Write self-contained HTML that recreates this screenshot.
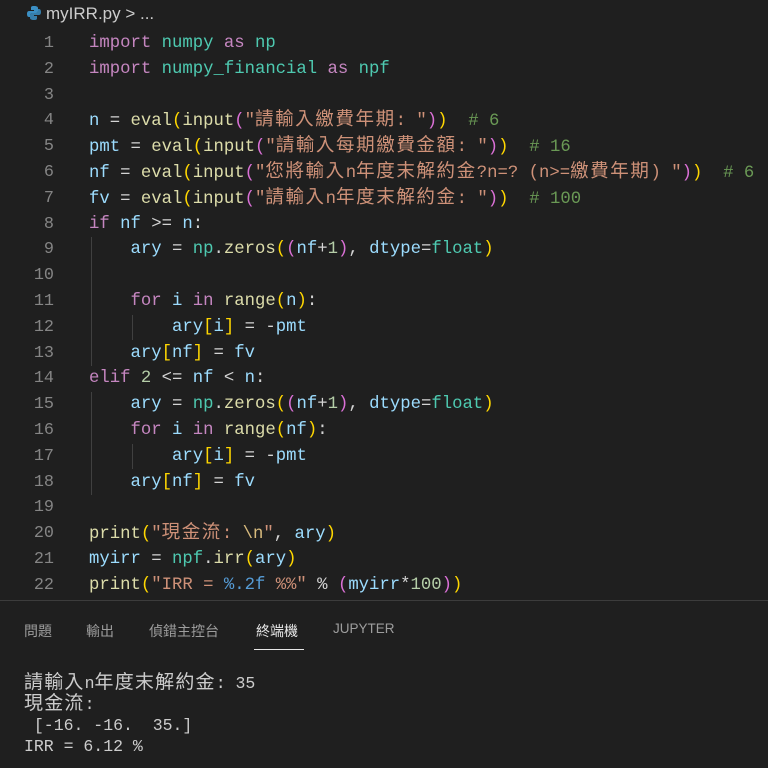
<!DOCTYPE html>
<html><head><meta charset="utf-8"><style>
body{margin:0;width:768px;height:767px;background:#1f1f1f;overflow:hidden;position:relative;font-family:"Liberation Mono","Noto Sans CJK TC",monospace;}
.bc{position:absolute;left:26px;top:4px;font:17px "Liberation Sans",sans-serif;color:#cccccc;}
.code{position:absolute;left:0;top:31px;width:768px;}
.l{position:relative;height:25.8px;line-height:25.8px;font-size:17.3px;white-space:pre;color:#d4d4d4;}
.n{position:absolute;left:0;width:54px;text-align:right;color:#858585;font-size:16.8px;}
.t{position:absolute;left:89px;}
i{font-style:normal;font-size:18.5px;letter-spacing:1.6px;}
.k{color:#c586c0}.m{color:#4ec9b0}.v{color:#9cdcfe}.f{color:#dcdcaa}.s{color:#ce9178}.c{color:#6a9955}.d{color:#b5cea8}.p1{color:#ffd700}.p2{color:#da70d6}.b{color:#569cd6}
.g{position:absolute;width:1px;background:#404040;}
.panel{position:absolute;left:0;top:600px;width:768px;height:167px;border-top:1px solid #3c3c3c;background:#1f1f1f;}
.tab{position:absolute;top:20px;font:14px "Liberation Sans","Noto Sans CJK TC",sans-serif;color:#9d9d9d;}
.term{position:absolute;left:24px;top:72px;font-size:16.5px;line-height:21px;color:#cccccc;white-space:pre;}
.term i{font-size:19px;letter-spacing:1.2px;}
</style></head><body>
<div class="bc"><svg width="16" height="16" viewBox="0 0 16 16" style="vertical-align:-2px;margin-right:4px"><path d="M8 1C5 1 5 2 5 3v2h3v1H3C1.5 6 1 7.5 1 9s.5 3 2 3h1v-2c0-1 1-2 2-2h4c1 0 2-1 2-2V3c0-1-1-2-4-2z" fill="#3b8fc4"/><path d="M8 15c3 0 3-1 3-2v-2H8v-1h5c1.5 0 2-1.5 2-3s-.5-3-2-3h-1v2c0 1-1 2-2 2H6c-1 0-2 1-2 2v3c0 1 1 2 4 2z" fill="#3b8fc4" opacity=".85"/></svg>myIRR.py &gt; ...</div>
<div class="code">
<div class="g" style="left:91px;top:206px;height:129px"></div>
<div class="g" style="left:132px;top:284px;height:25px"></div>
<div class="g" style="left:91px;top:361px;height:103px"></div>
<div class="g" style="left:132px;top:413px;height:25px"></div>
<div class="l"><span class="n">1</span><span class="t"><span class="k">import</span> <span class="m">numpy</span> <span class="k">as</span> <span class="m">np</span></span></div>
<div class="l"><span class="n">2</span><span class="t"><span class="k">import</span> <span class="m">numpy_financial</span> <span class="k">as</span> <span class="m">npf</span></span></div>
<div class="l"><span class="n">3</span></div>
<div class="l"><span class="n">4</span><span class="t"><span class="v">n</span> = <span class="f">eval</span><span class="p1">(</span><span class="f">input</span><span class="p2">(</span><span class="s">"<i>請輸入繳費年期</i>: "</span><span class="p2">)</span><span class="p1">)</span>  <span class="c"># 6</span></span></div>
<div class="l"><span class="n">5</span><span class="t"><span class="v">pmt</span> = <span class="f">eval</span><span class="p1">(</span><span class="f">input</span><span class="p2">(</span><span class="s">"<i>請輸入每期繳費金額</i>: "</span><span class="p2">)</span><span class="p1">)</span>  <span class="c"># 16</span></span></div>
<div class="l"><span class="n">6</span><span class="t"><span class="v">nf</span> = <span class="f">eval</span><span class="p1">(</span><span class="f">input</span><span class="p2">(</span><span class="s">"<i>您將輸入</i>n<i>年度末解約金</i>?n=? (n&gt;=<i>繳費年期</i>) "</span><span class="p2">)</span><span class="p1">)</span>  <span class="c"># 6</span></span></div>
<div class="l"><span class="n">7</span><span class="t"><span class="v">fv</span> = <span class="f">eval</span><span class="p1">(</span><span class="f">input</span><span class="p2">(</span><span class="s">"<i>請輸入</i>n<i>年度末解約金</i>: "</span><span class="p2">)</span><span class="p1">)</span>  <span class="c"># 100</span></span></div>
<div class="l"><span class="n">8</span><span class="t"><span class="k">if</span> <span class="v">nf</span> &gt;= <span class="v">n</span>:</span></div>
<div class="l"><span class="n">9</span><span class="t">    <span class="v">ary</span> = <span class="m">np</span>.<span class="f">zeros</span><span class="p1">(</span><span class="p2">(</span><span class="v">nf</span>+<span class="d">1</span><span class="p2">)</span>, <span class="v">dtype</span>=<span class="m">float</span><span class="p1">)</span></span></div>
<div class="l"><span class="n">10</span></div>
<div class="l"><span class="n">11</span><span class="t">    <span class="k">for</span> <span class="v">i</span> <span class="k">in</span> <span class="f">range</span><span class="p1">(</span><span class="v">n</span><span class="p1">)</span>:</span></div>
<div class="l"><span class="n">12</span><span class="t">        <span class="v">ary</span><span class="p1">[</span><span class="v">i</span><span class="p1">]</span> = -<span class="v">pmt</span></span></div>
<div class="l"><span class="n">13</span><span class="t">    <span class="v">ary</span><span class="p1">[</span><span class="v">nf</span><span class="p1">]</span> = <span class="v">fv</span></span></div>
<div class="l"><span class="n">14</span><span class="t"><span class="k">elif</span> <span class="d">2</span> &lt;= <span class="v">nf</span> &lt; <span class="v">n</span>:</span></div>
<div class="l"><span class="n">15</span><span class="t">    <span class="v">ary</span> = <span class="m">np</span>.<span class="f">zeros</span><span class="p1">(</span><span class="p2">(</span><span class="v">nf</span>+<span class="d">1</span><span class="p2">)</span>, <span class="v">dtype</span>=<span class="m">float</span><span class="p1">)</span></span></div>
<div class="l"><span class="n">16</span><span class="t">    <span class="k">for</span> <span class="v">i</span> <span class="k">in</span> <span class="f">range</span><span class="p1">(</span><span class="v">nf</span><span class="p1">)</span>:</span></div>
<div class="l"><span class="n">17</span><span class="t">        <span class="v">ary</span><span class="p1">[</span><span class="v">i</span><span class="p1">]</span> = -<span class="v">pmt</span></span></div>
<div class="l"><span class="n">18</span><span class="t">    <span class="v">ary</span><span class="p1">[</span><span class="v">nf</span><span class="p1">]</span> = <span class="v">fv</span></span></div>
<div class="l"><span class="n">19</span></div>
<div class="l"><span class="n">20</span><span class="t"><span class="f">print</span><span class="p1">(</span><span class="s">"<i>現金流</i>: <span style="color:#d7ba7d">\n</span>"</span>, <span class="v">ary</span><span class="p1">)</span></span></div>
<div class="l"><span class="n">21</span><span class="t"><span class="v">myirr</span> = <span class="m">npf</span>.<span class="f">irr</span><span class="p1">(</span><span class="v">ary</span><span class="p1">)</span></span></div>
<div class="l"><span class="n">22</span><span class="t"><span class="f">print</span><span class="p1">(</span><span class="s">"IRR = </span><span class="b">%.2f</span> <span class="s">%%"</span> % <span class="p2">(</span><span class="v">myirr</span>*<span class="d">100</span><span class="p2">)</span><span class="p1">)</span></span></div>
</div>
<div class="panel">
<span class="tab" style="left:24px">問題</span>
<span class="tab" style="left:86px">輸出</span>
<span class="tab" style="left:149px">偵錯主控台</span>
<span class="tab" style="left:256px;color:#e7e7e7">終端機</span>
<div style="position:absolute;left:254px;top:48px;width:50px;height:1px;background:#e7e7e7"></div>
<span class="tab" style="left:333px;font-size:13.5px">JUPYTER</span>
<div class="term"><i>請輸入</i>n<i>年度末解約金</i>: 35
<i>現金流</i>:
 [-16. -16.  35.]
IRR = 6.12 %</div>
</div>
</body></html>
